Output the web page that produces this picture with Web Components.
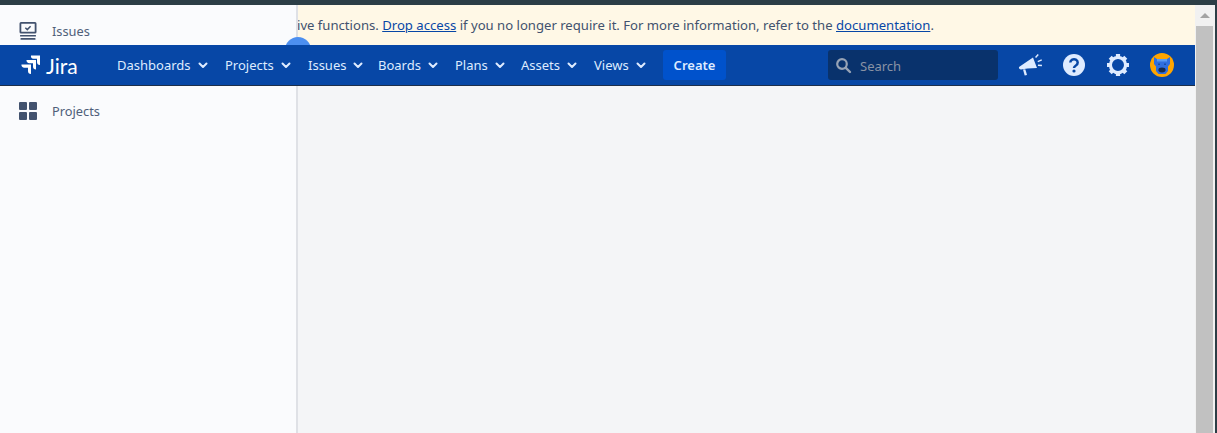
<!DOCTYPE html>
<html>
<head>
<meta charset="utf-8">
<title>Jira</title>
<style>
  html, body { margin: 0; height: 100%; overflow: hidden; background: #2c3e46; }
  body { font-family: "Noto Sans", "Open Sans", sans-serif; }
</style>
</head>
<body>
<jira-shell>
  <side-bar slot="side">
    <side-item label="Issues" icon="issues"></side-item>
    <side-item label="Projects" icon="projects"></side-item>
  </side-bar>
  <notice-banner slot="banner">
    <span style="margin-left:-1px">ive functions.&nbsp;</span><a href="#">Drop access</a>&nbsp;if you no longer require it. For more information, refer to the&nbsp;<a href="#">documentation</a>.
  </notice-banner>
  <top-nav slot="nav">
    <nav-item label="Dashboards" style="width:108px"></nav-item>
    <nav-item label="Projects" style="width:83px"></nav-item>
    <nav-item label="Issues" style="width:70px"></nav-item>
    <nav-item label="Boards" style="width:77px"></nav-item>
    <nav-item label="Plans" style="width:66px"></nav-item>
    <nav-item label="Assets" style="width:73px"></nav-item>
    <nav-item label="Views" style="width:69px"></nav-item>
  </top-nav>
</jira-shell>

<script>
// Page frame: dark strip on top, grid with sidebar / banner / nav / content, scrollbar on the right
class JiraShell extends HTMLElement {
  constructor() {
    super();
    this.attachShadow({ mode: 'open' });
    this.shadowRoot.innerHTML = `
      <style>
        :host { display: flex; flex-direction: column; height: 100vh; }
        .strip { height: 5px; background: #2c3e46; flex: none; }
        .row { flex: 1; display: flex; min-height: 0; }
        .grid {
          position: relative;
          flex: 1;
          display: grid;
          grid-template-columns: 298px 1fr;
          grid-template-rows: 40px 41px 1fr;
        }
        ::slotted([slot=side]) { grid-column: 1; grid-row: 1 / 4; }
        ::slotted([slot=banner]) { grid-column: 2; grid-row: 1; }
        ::slotted([slot=nav]) { grid-column: 1 / 3; grid-row: 2; z-index: 2; }
        .content { grid-column: 2; grid-row: 3; background: #f4f5f7; }
        .handle {
          position: absolute; left: 285px; top: 32px;
          width: 26px; height: 26px; border-radius: 50%;
          background: #4c8ff0; z-index: 1;
        }
      </style>
      <div class="strip"></div>
      <div class="row">
        <div class="grid">
          <slot name="side"></slot>
          <slot name="banner"></slot>
          <slot name="nav"></slot>
          <div class="content"></div>
          <div class="handle"></div>
        </div>
        <page-scrollbar></page-scrollbar>
      </div>
    `;
  }
}

class SideBar extends HTMLElement {
  constructor() {
    super();
    this.attachShadow({ mode: 'open' });
    this.shadowRoot.innerHTML = `
      <style>
        :host {
          display: flex; flex-direction: column; gap: 48px;
          background: #fafbfd;
          border-right: 2px solid #dfe1e6;
          box-sizing: border-box;
          padding-top: 10px;
          overflow: hidden;
        }
      </style>
      <slot></slot>
    `;
  }
}

class SideItem extends HTMLElement {
  constructor() {
    super();
    this.attachShadow({ mode: 'open' });
  }

  connectedCallback() {
    const icons = {
      issues: `<svg width="18" height="18" viewBox="0 0 18 18">
        <path fill="#42526e" fill-rule="evenodd" d="M2 0h14a1.500 1.500 0 0 1 1.500 1.500v8.500a1.500 1.500 0 0 1-1.500 1.500H2A1.500 1.500 0 0 1 .5 10V1.500A1.500 1.500 0 0 1 2 0zm.3 1.800v7.900h13.400V1.800z"/>
        <path fill="none" stroke="#42526e" stroke-width="1.500" d="M6.300 5.800l2 1.800 3.300-3.400"/>
        <rect x="1" y="13" width="16" height="1.600" rx=".5" fill="#42526e"/>
        <rect x="1.500" y="16" width="15" height="1.800" rx=".5" fill="#42526e"/>
      </svg>`,
      projects: `<svg width="18" height="18" viewBox="0 0 18 18" fill="#42526e">
        <rect x="0" y="0" width="8" height="8" rx="1"/><rect x="10" y="0" width="8" height="8" rx="1"/>
        <rect x="0" y="10" width="8" height="8" rx="1"/><rect x="10" y="10" width="8" height="8" rx="1"/>
      </svg>`
    };
    this.shadowRoot.innerHTML = `
      <style>
        :host { display: flex; align-items: center; gap: 15px; height: 32px; padding-left: 19px; }
        svg { display: block; flex: none; }
        span { font-size: 12.800px; color: #4f5f7a; }
      </style>
      ${icons[this.getAttribute('icon')]}
      <span>${this.getAttribute('label')}</span>
    `;
  }
}

class NoticeBanner extends HTMLElement {
  constructor() {
    super();
    this.attachShadow({ mode: 'open' });
    this.shadowRoot.innerHTML = `
      <style>
        :host {
          display: block; overflow: hidden;
          background: #fff8e6;
          color: #42526e;
          font-size: 13.120px;
          line-height: 40px;
          white-space: nowrap;
        }
        ::slotted(a) { color: #0747a6; }
      </style>
      <slot></slot>
    `;
  }
}

class NavItem extends HTMLElement {
  constructor() {
    super();
    this.attachShadow({ mode: 'open' });
  }

  connectedCallback() {
    this.shadowRoot.innerHTML = `
      <style>
        :host { display: flex; flex: none; align-items: center; gap: 7px; color: #deebff; font-size: 13px; }
        svg { display: block; }
      </style>
      <span>${this.getAttribute('label')}</span>
      <svg width="10" height="7" viewBox="0 0 10 7"><path d="M1.500 1.500L5 5l3.500-3.500" fill="none" stroke="#deebff" stroke-width="2" stroke-linecap="round" stroke-linejoin="round"/></svg>
    `;
  }
}

class TopNav extends HTMLElement {
  constructor() {
    super();
    this.attachShadow({ mode: 'open' });
    this.shadowRoot.innerHTML = `
      <style>
        :host {
          display: flex; align-items: center;
          height: 41px; box-sizing: border-box;
          background: #0747a6;
          border-bottom: 1px solid #1d2f4a;
          padding-left: 21px;
          color: #deebff;
        }
        .logo { display: flex; align-items: center; gap: 5px; width: 96px; flex: none; }
        .logo svg { display: block; }
        .logo span { font-family: Lato, "Noto Sans", sans-serif; font-size: 21px; font-weight: 400; color: #fff; line-height: 1; }
        .items { display: flex; }
        .create {
          width: 63px; height: 30px; border-radius: 3px;
          background: #0052cc; color: #deebff; font-size: 13px; font-weight: 600;
          display: flex; align-items: center; justify-content: center;
        }
        .search {
          margin-left: 102px; width: 170px; height: 30px; border-radius: 3px;
          background: #09326c; color: #8993a4; font-size: 13px;
          display: flex; align-items: center; gap: 8px; padding-left: 7px; box-sizing: border-box;
        }
        .search span { position: relative; top: 1px; }
        .icons { display: flex; align-items: center; gap: 20px; margin-left: 20px; }
        .icons svg { display: block; }
      </style>
      <div class="logo">
        <svg width="20" height="20" viewBox="0 0 20 20">
          <defs>
            <linearGradient id="f" x1="1" y1="0" x2="0" y2="1">
              <stop offset="0" stop-color="#fff"/><stop offset=".55" stop-color="#fff"/><stop offset="1" stop-color="#7fa6e0"/>
            </linearGradient>
          </defs>
          <path fill="#fff" d="M10 .5h9v9.500a3 3 0 0 1-3-3V3.800h-3.500A2.800 2.800 0 0 1 10 .5z"/>
          <path fill="url(#f)" d="M5.500 5h9.500v9.500a3 3 0 0 1-3-3V8.200H8.300A2.800 2.800 0 0 1 5.500 5z"/>
          <path fill="url(#f)" d="M.5 9.500H10v9.500a3 3 0 0 1-3-3v-3.200H3.300A2.800 2.800 0 0 1 .5 9.500z"/>
        </svg>
        <span>Jira</span>
      </div>
      <div class="items"><slot></slot></div>
      <div class="create">Create</div>
      <div class="search">
        <svg width="17" height="17" viewBox="0 0 17 17"><circle cx="7" cy="7" r="4.800" fill="none" stroke="#97a3b5" stroke-width="2.200"/><path d="M10.800 10.800l4.200 4.200" stroke="#97a3b5" stroke-width="2.400" stroke-linecap="round"/></svg>
        <span>Search</span>
      </div>
      <div class="icons">
        <svg width="24" height="24" viewBox="0 0 24 24" fill="#deebff">
          <path d="M1 14L15 4.500l4 10.500-9.500 .6-6.500 .9a2 2 0 0 1-2-2.500z"/>
          <path d="M5 16.500l2.300-.3 1.700 5.800-2.300 .4z"/>
          <path d="M17 4l2.700-3 1.100 1-2.700 3zM19.500 8l4-1.700.5 1.300-4 1.700zM20 11.500l4 .3-.1 1.400-4-.3z"/>
        </svg>
        <svg width="24" height="24" viewBox="0 0 24 24">
          <circle cx="12" cy="12" r="11" fill="#deebff"/>
          <path d="M8.300 9.500a3.700 3.400 0 1 1 5.600 3c-1.300.8-1.900 1.300-1.900 2.500" fill="none" stroke="#0747a6" stroke-width="2.500"/>
          <circle cx="12" cy="18" r="1.600" fill="#0747a6"/>
        </svg>
        <svg width="24" height="24" viewBox="0 0 24 24">
          <circle cx="12" cy="12" r="7.600" fill="none" stroke="#deebff" stroke-width="3.200"/>
          <g stroke="#deebff" stroke-width="4.200">
            <path d="M12 1v4M12 19v4M1 12h4M19 12h4M4.200 4.200l2.900 2.900M16.900 16.900l2.900 2.900M4.200 19.800l2.900-2.900M16.900 7.100l2.900-2.900"/>
          </g>
        </svg>
        <svg width="24" height="24" viewBox="0 0 24 24">
          <circle cx="12" cy="12" r="12" fill="#ffa500"/>
          <path fill="#2f6fe0" d="M4 4l3 2h10l3-2v7l-2 2.500V18l-2.500 3h-7L6 18v-4.500L4 11z"/>
          <path fill="#5a9bf2" d="M7 6h10v2.500H7z"/>
          <ellipse cx="12" cy="17" rx="3.600" ry="2.400" fill="#172b4d"/>
          <path fill="#1c4fa8" d="M8 10.500h2v1.500H8zM14 10.500h2v1.500h-2z"/>
        </svg>
      </div>
    `;
  }
}

class PageScrollbar extends HTMLElement {
  constructor() {
    super();
    this.attachShadow({ mode: 'open' });
    this.shadowRoot.innerHTML = `
      <style>
        :host {
          display: flex; flex-direction: column; flex: none;
          width: 20px; background: #f1f1f1;
          margin-right: 2px; padding: 0 2px 0 1px; box-sizing: border-box;
        }
        .up { height: 21px; flex: none; display: flex; align-items: center; justify-content: center; }
        .up i { width: 0; height: 0; border: 5px solid transparent; border-top: 0; border-bottom: 5px solid #a3a3a3; }
        .thumb { flex: 1; background: #c1c1c1; }
      </style>
      <div class="up"><i></i></div>
      <div class="thumb"></div>
    `;
  }
}

customElements.define('jira-shell', JiraShell);
customElements.define('side-bar', SideBar);
customElements.define('side-item', SideItem);
customElements.define('notice-banner', NoticeBanner);
customElements.define('nav-item', NavItem);
customElements.define('top-nav', TopNav);
customElements.define('page-scrollbar', PageScrollbar);
</script>
</body>
</html>
